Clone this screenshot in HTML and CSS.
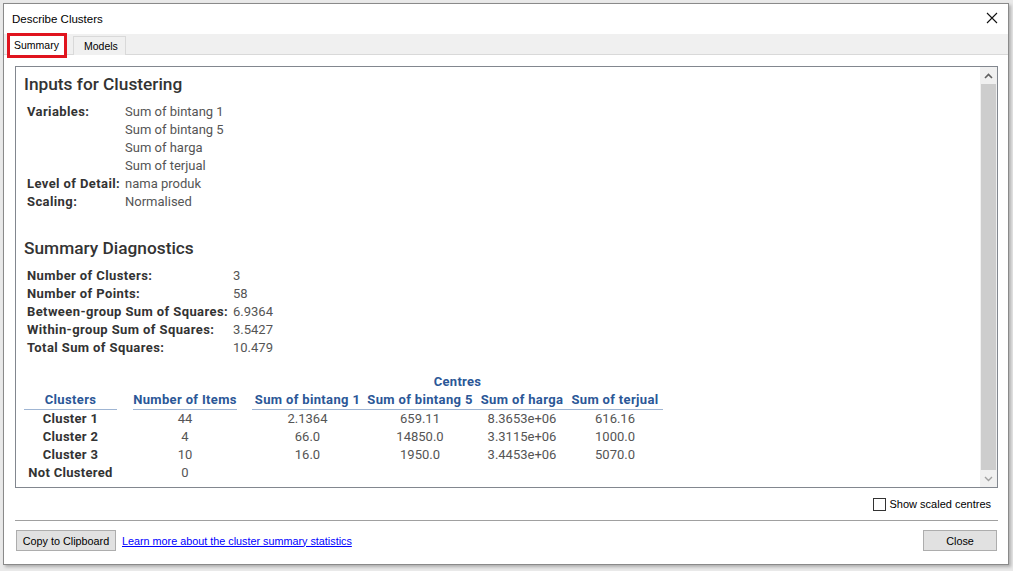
FILE: index.html
```html
<!DOCTYPE html>
<html>
<head>
<meta charset="utf-8">
<link rel="stylesheet" href="styles.css">
</head>
<body>
<div class="dialog">
  <div class="titlebar">
    <span class="title">Describe Clusters</span>
    <svg class="close-x" width="12" height="12" viewBox="0 0 12 12"><path d="M1 1L11 11M11 1L1 11" stroke="#111" stroke-width="1.1" fill="none"/></svg>
  </div>
  <div class="tabstrip">
    <div class="tab active">Summary</div>
    <div class="tab">Models</div>
  </div>
  <div class="body">
    <div class="report">
      <div class="report-content">
        <h2 class="heading">Inputs for Clustering</h2>
        <div class="kv kv-inputs">
          <div class="k">Variables:</div>
          <div class="v">Sum of bintang 1<br>Sum of bintang 5<br>Sum of harga<br>Sum of terjual</div>
          <div class="k">Level of Detail:</div>
          <div class="v">nama produk</div>
          <div class="k">Scaling:</div>
          <div class="v">Normalised</div>
        </div>
        <h2 class="heading heading-2">Summary Diagnostics</h2>
        <div class="kv kv-diag">
          <div class="k">Number of Clusters:</div><div class="v">3</div>
          <div class="k">Number of Points:</div><div class="v">58</div>
          <div class="k">Between-group Sum of Squares:</div><div class="v">6.9364</div>
          <div class="k">Within-group Sum of Squares:</div><div class="v">3.5427</div>
          <div class="k">Total Sum of Squares:</div><div class="v">10.479</div>
        </div>
        <div class="ctable">
          <div class="centres">Centres</div>
          <div class="hd hd-sep">Clusters</div>
          <div class="hd hd-sep">Number of Items</div>
          <div class="hd hd-c">Sum of bintang 1</div>
          <div class="hd hd-c">Sum of bintang 5</div>
          <div class="hd hd-c">Sum of harga</div>
          <div class="hd hd-c">Sum of terjual</div>

          <div class="rk">Cluster 1</div><div class="rv">44</div><div class="rv">2.1364</div><div class="rv">659.11</div><div class="rv">8.3653e+06</div><div class="rv">616.16</div>
          <div class="rk">Cluster 2</div><div class="rv">4</div><div class="rv">66.0</div><div class="rv">14850.0</div><div class="rv">3.3115e+06</div><div class="rv">1000.0</div>
          <div class="rk">Cluster 3</div><div class="rv">10</div><div class="rv">16.0</div><div class="rv">1950.0</div><div class="rv">3.4453e+06</div><div class="rv">5070.0</div>
          <div class="rk">Not Clustered</div><div class="rv">0</div><div class="rv"></div><div class="rv"></div><div class="rv"></div><div class="rv"></div>
        </div>
      </div>
      <div class="scrollbar">
        <div class="sb-btn"><svg width="9" height="6" viewBox="0 0 9 6"><path d="M1 5L4.5 1.5L8 5" stroke="#606060" stroke-width="1.6" fill="none"/></svg></div>
        <div class="sb-thumb"></div>
        <div class="sb-btn"><svg width="9" height="6" viewBox="0 0 9 6"><path d="M1 1L4.5 4.5L8 1" stroke="#a0a0a0" stroke-width="1.4" fill="none"/></svg></div>
      </div>
    </div>
    <div class="option-row">
      <label class="check"><span class="box"></span>Show scaled centres</label>
    </div>
    <div class="separator"></div>
    <div class="footer">
      <button class="btn btn-copy">Copy to Clipboard</button>
      <a class="link" href="#">Learn more about the cluster summary statistics</a>
      <span class="spacer"></span>
      <button class="btn btn-close">Close</button>
    </div>
  </div>
</div>
</body>
</html>
```

FILE: styles.css
```css
html, body {
  margin: 0;
  padding: 0;
}
body {
  width: 1013px;
  height: 571px;
  overflow: hidden;
  background: #e9e9e9;
  font-family: "Liberation Sans", Arial, sans-serif;
}
.dialog {
  box-sizing: border-box;
  margin: 3px 0 0 3px;
  width: 1006px;
  height: 562px;
  background: #fff;
  border: 1px solid #8a8a8a;
  box-shadow: 2px 2px 3px rgba(0,0,0,0.25);
  display: flex;
  flex-direction: column;
}
.titlebar {
  height: 30px;
  display: flex;
  align-items: center;
  padding: 0 10px 0 8px;
}
.title {
  font-size: 11.5px;
  color: #000;
  flex: 1;
}
.close-x { margin-top: -2px; }
.tabstrip {
  height: 20px;
  background: #f0f0f0;
  border-bottom: 1px solid #d9d9d9;
  display: flex;
  align-items: flex-end;
  padding-left: 6px;
  gap: 9px;
}
.tab {
  font-size: 10.5px;
  color: #000;
  box-sizing: border-box;
  margin-bottom: -1px;
}
.tab.active {
  background: #fff;
  height: 19px;
  line-height: 19px;
  width: 54px;
  padding: 0 0 0 4px;
  outline: 3px solid #e0141e;
}
.tab:not(.active) {
  width: 53px;
  height: 19px;
  line-height: 18px;
  padding-left: 10px;
  border: 1px solid #d9d9d9;
  border-bottom: none;
  background: #f0f0f0;
}
.body {
  flex: 1;
  display: flex;
  flex-direction: column;
  padding: 11px 10px 0 11px;
}
.report {
  height: 422px;
  box-sizing: border-box;
  border: 1px solid #82878f;
  display: flex;
}
.report-content {
  flex: 1;
  padding: 6px 0 0 8px;
  font-family: Roboto, "Liberation Sans", sans-serif;
  color: #333;
}
.heading {
  margin: 0;
  font-size: 17.3px;
  line-height: 22px;
  font-weight: 500;
  color: #333;
}
.heading-2 { margin-top: 26px; }
.kv {
  display: grid;
  margin: 8px 0 0 3px;
  font-size: 13px;
  line-height: 18px;
}
.kv-inputs { grid-template-columns: 98px auto; }
.kv-diag { grid-template-columns: 206px auto; }
.k { font-weight: 700; letter-spacing: 0.4px; color: #333; white-space: nowrap; }
.v { color: #555; }
.ctable {
  margin-top: 16px;
  display: grid;
  grid-template-columns: 93px 16px 104px 15px 111px 114px 90px 96px;
  font-size: 13px;
  line-height: 18px;
  text-align: center;
}
.centres {
  grid-column: 5 / 9;
  color: #2b5797;
  font-weight: 700;
  letter-spacing: 0.3px;
}
.hd {
  color: #2b5797;
  font-weight: 700;
  letter-spacing: 0.35px;
  border-bottom: 1px solid #9fb5d3;
  white-space: nowrap;
}
.ctable > .hd:nth-of-type(2) { grid-column: 1; }
.ctable > .hd:nth-of-type(3) { grid-column: 3; }
.ctable > .hd:nth-of-type(4) { grid-column: 5; }
.rk { grid-column: 1; font-weight: 700; letter-spacing: 0.3px; color: #333; white-space: nowrap; }
.rv { color: #555; }
.ctable > .rk + .rv { grid-column: 3; }
.ctable > .rk + .rv + .rv { grid-column: 5; }
.scrollbar {
  width: 17px;
  background: #f0f0f0;
  display: flex;
  flex-direction: column;
}
.sb-btn {
  height: 17px;
  display: flex;
  align-items: center;
  justify-content: center;
}
.sb-thumb {
  flex: 1;
  background: #cdcdcd;
  margin: 0 1px;
}
.option-row {
  height: 32px;
  display: flex;
  justify-content: flex-end;
  align-items: center;
  padding-right: 7px;
}
.check {
  display: flex;
  align-items: center;
  font-size: 11px;
  color: #000;
}
.box {
  width: 11px;
  height: 11px;
  border: 1px solid #333;
  margin-right: 4px;
  background: #fff;
}
.separator {
  height: 1px;
  background: #a0a0a0;
}
.footer {
  display: flex;
  align-items: center;
  padding-top: 9px;
}
.btn {
  height: 21px;
  background: #e1e1e1;
  border: 1px solid #adadad;
  font-family: "Liberation Sans", Arial, sans-serif;
  font-size: 10.8px;
  color: #000;
  padding: 0;
  margin: 0;
}
.btn-copy { width: 100px; margin-left: 1px; }
.btn-close { width: 74px; margin-right: 1px; }
.link {
  margin-left: 6px;
  font-size: 10.8px;
  color: #0000ff;
  text-decoration: underline;
}
.spacer { flex: 1; }
```
